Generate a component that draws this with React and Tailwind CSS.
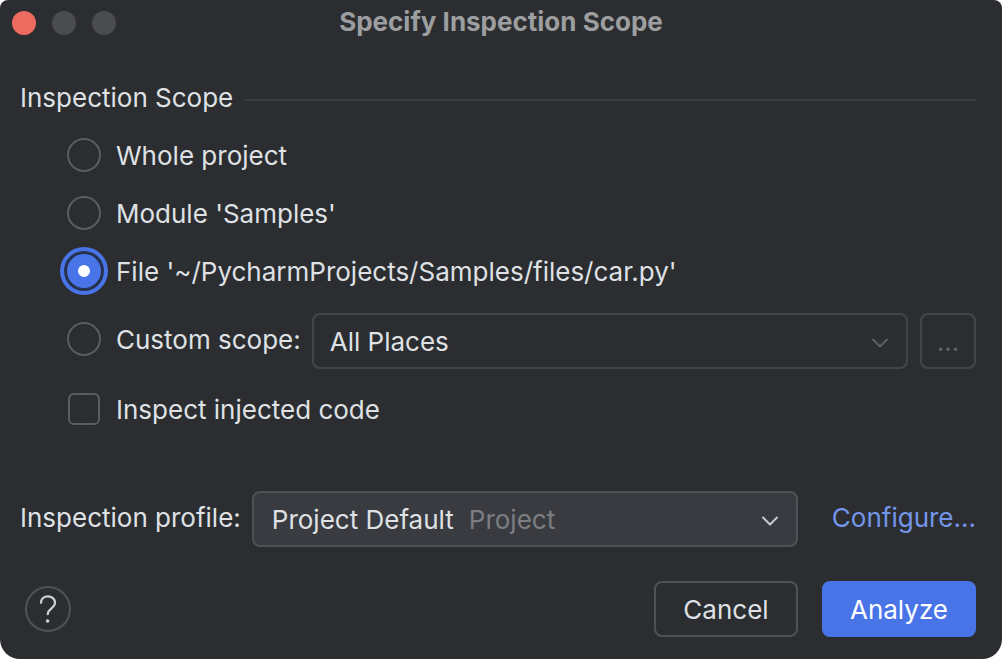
import React, { useState } from 'react';

const radioClass =
    'size-[34px] shrink-0 appearance-none rounded-full border-2 border-[#5a5c60] outline-none checked:border-[11px] checked:border-[#4874e8] checked:bg-white checked:ring-4 checked:ring-[#4874e8] checked:ring-offset-3 checked:ring-offset-[#25324d]';

function TitleBar({ title }) {
    return (
        <header className="relative flex h-[46px] items-center gap-4 px-3">
            <span className="size-6 rounded-full bg-[#ed6a5e]" />
            <span className="size-6 rounded-full bg-[#4b4c4e]" />
            <span className="size-6 rounded-full bg-[#4b4c4e]" />
            <h1 className="pointer-events-none absolute inset-x-0 pb-0.5 text-center font-bold text-[#9d9ea0]">
                {title}
            </h1>
        </header>
    );
}

function Chevron({ className }) {
    return (
        <svg viewBox="0 0 18 12" fill="none" stroke="currentColor" strokeWidth="1.8" strokeLinecap="round" strokeLinejoin="round" className={className}>
            <path d="M2 2.5 9 9.5 16 2.5" />
        </svg>
    );
}

function ScopeRadio({ id, label, scope, setScope }) {
    return (
        <div className="flex h-[58px] items-center gap-[15px]">
            <input
                type="radio"
                name="scope"
                id={id}
                checked={scope === id}
                onChange={() => setScope(id)}
                className={radioClass}
            />
            <label htmlFor={id} className="pt-0.5">{label}</label>
        </div>
    );
}

function App() {
    const [scope, setScope] = useState('file');

    return (
        <div
            role="dialog"
            aria-label="Specify Inspection Scope"
            className="rounded-t-lg rounded-b-[20px] bg-[#2b2d30] pb-[22px] text-[26px] leading-9 text-[#dfe1e5]"
            style={{ fontFamily: 'Inter, sans-serif' }}
        >
            <TitleBar title="Specify Inspection Scope" />

            <form className="pt-[34px] pr-[26px] pl-5" onSubmit={(e) => e.preventDefault()}>
                <div className="flex items-center gap-[11px]">
                    <h2>Inspection Scope</h2>
                    <span className="mt-[3px] h-0.5 flex-1 bg-[#393b40]" />
                </div>

                <div className="pt-[10px] pl-[47px]">
                    <ScopeRadio id="project" label="Whole project" scope={scope} setScope={setScope} />
                    <ScopeRadio id="module" label="Module 'Samples'" scope={scope} setScope={setScope} />
                    <ScopeRadio id="file" label="File '~/PycharmProjects/Samples/files/car.py'" scope={scope} setScope={setScope} />

                    <div className="mt-[13px] flex items-center gap-3">
                        <div className="-mr-px flex items-center gap-[15px] pb-1">
                            <input
                                type="radio"
                                name="scope"
                                id="custom"
                                checked={scope === 'custom'}
                                onChange={() => setScope('custom')}
                                className={radioClass}
                            />
                            <label htmlFor="custom" className="pt-0.5 whitespace-nowrap">Custom scope:</label>
                        </div>
                        <div className="relative flex-1">
                            <select
                                aria-label="Custom scope"
                                className="h-14 w-full appearance-none rounded-lg border-2 border-[#43454a] px-4 pt-0.5 outline-none"
                            >
                                <option>All Places</option>
                            </select>
                            <Chevron className="pointer-events-none absolute top-6 right-[19px] h-3 w-[18px] text-[#5f6165]" />
                        </div>
                        <button type="button" className="h-14 w-14 rounded-lg border-2 border-[#43454a] pt-0.5 text-[#5f6165]">
                            ...
                        </button>
                    </div>

                    <div className="mt-[21px] flex items-center gap-4 pl-px">
                        <input
                            type="checkbox"
                            id="injected"
                            className="size-8 appearance-none rounded-md border-2 border-[#5a5c60] outline-none checked:bg-[#4874e8]"
                        />
                        <label htmlFor="injected" className="pt-0.5">Inspect injected code</label>
                    </div>
                </div>

                <div className="mt-[63px] flex items-center">
                    <label htmlFor="profile" className="mr-[11px] pb-0.5 whitespace-nowrap">Inspection profile:</label>
                    <div className="relative mr-[34px] flex-1">
                        <select
                            id="profile"
                            className="h-14 w-full appearance-none rounded-lg border-2 border-[#4e5157] bg-[#393b40] px-[18px] pt-0.5 outline-none"
                        >
                            <option>Project Default</option>
                        </select>
                        <span className="pointer-events-none absolute top-[11px] left-[217px] text-[#7c7e82]">Project</span>
                        <Chevron className="pointer-events-none absolute top-6 right-[19px] h-3 w-[18px] text-[#ced0d6]" />
                    </div>
                    <a href="#configure" className="pb-0.5 text-[#7396ea]">Configure...</a>
                </div>

                <div className="mt-[34px] flex items-center gap-6">
                    <button
                        type="button"
                        aria-label="Help"
                        className="mr-auto ml-[5px] flex size-[46px] items-center justify-center rounded-full border-2 border-[#505257]"
                    >
                        <svg viewBox="0 0 18 30" fill="none" className="h-[30px] w-[18px]">
                            <path
                                d="M2 8.8C2 4.8 5 2.300 9 2.300s7 2.700 7 6.500c0 5.400-7.200 5.600-7.200 11.400"
                                stroke="#ced0d6"
                                strokeWidth="2.200"
                                strokeLinecap="round"
                            />
                            <circle cx="8.600" cy="27" r="1.800" fill="#ced0d6" />
                        </svg>
                    </button>
                    <button type="button" className="h-14 w-36 rounded-lg border-2 border-[#4e5157] pt-0.5">
                        Cancel
                    </button>
                    <button type="submit" className="h-14 w-[154px] rounded-lg bg-[#4874e8] pt-0.5 text-white">
                        Analyze
                    </button>
                </div>
            </form>
        </div>
    );
}

export default App;
